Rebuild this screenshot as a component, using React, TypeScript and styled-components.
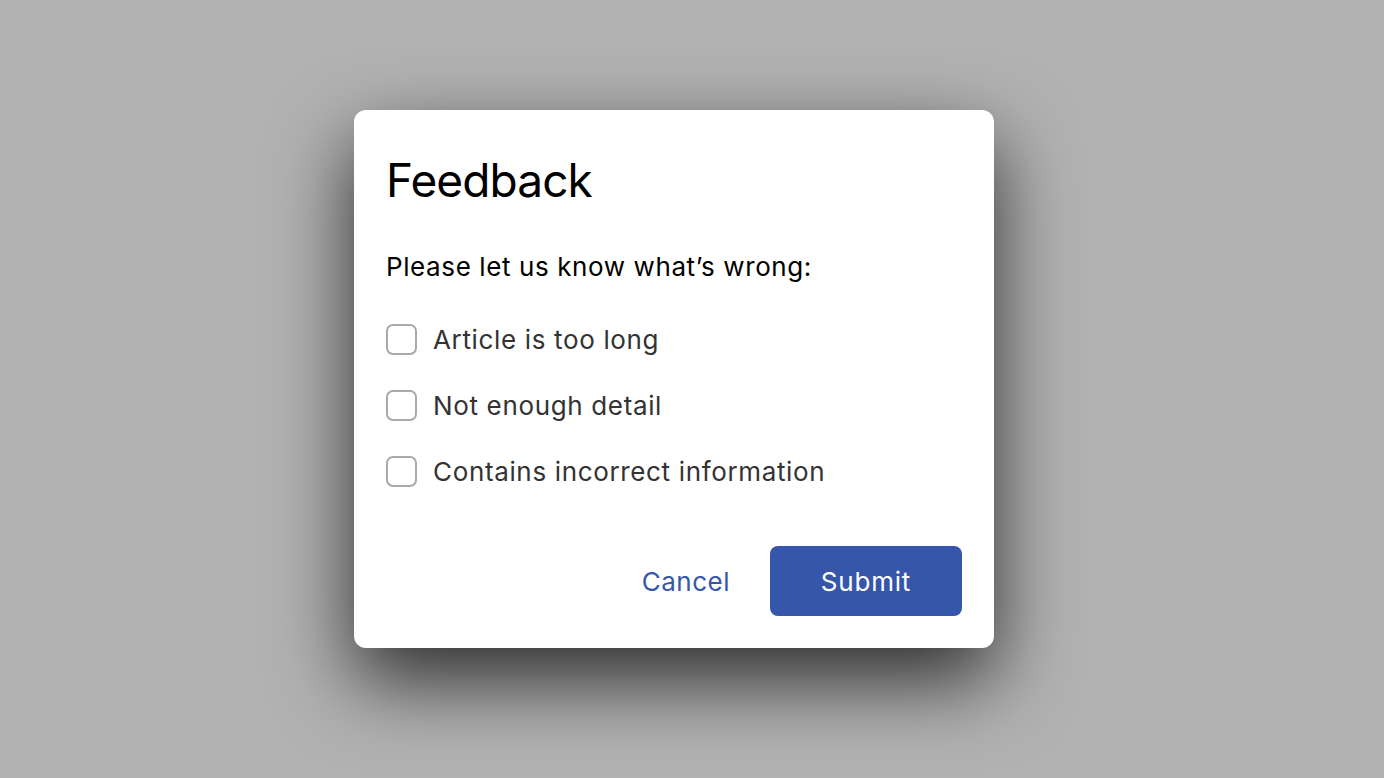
import React from "react";
import styled, { createGlobalStyle } from "styled-components";

const Global = createGlobalStyle`
  html, body { margin: 0; padding: 0; }
  body { background: #b2b2b2; font-family: Inter, "Noto Sans", sans-serif; }
`;

const Backdrop = styled.div`
  min-height: 100vh;
  box-sizing: border-box;
  padding: 110px 0 0 354px;
  display: flex;
  align-items: flex-start;
`;

const Dialog = styled.div`
  width: 640px;
  height: 538px;
  box-sizing: border-box;
  background: #fff;
  border-radius: 12px;
  padding: 32px;
  display: flex;
  flex-direction: column;
  box-shadow: 0 32px 80px rgba(0, 0, 0, 0.75);
`;

const Title = styled.h1`
  margin: 0;
  font-size: 46px;
  font-weight: 400;
  line-height: 76px;
  color: #000;
  letter-spacing: -0.9px;
`;

const Prompt = styled.p`
  margin: 29px 0 0;
  font-size: 26px;
  line-height: 40px;
  color: #000;
  letter-spacing: 0.6px;
`;

const Options = styled.div`
  display: flex;
  flex-direction: column;
  gap: 26px;
  margin-top: 32px;
`;

const Row = styled.label`
  display: flex;
  align-items: center;
  gap: 16px;
  height: 40px;
  cursor: pointer;
`;

const Box = styled.input.attrs({ type: "checkbox" })`
  appearance: none;
  margin: 0;
  width: 31px;
  height: 31px;
  box-sizing: border-box;
  border: 2px solid #a9a9a9;
  border-radius: 7px;
  background: #fff;
`;

const Label = styled.span`
  font-size: 26px;
  color: #333;
  letter-spacing: 0.65px;
`;

const Actions = styled.div`
  margin-top: auto;
  display: flex;
  justify-content: flex-end;
  align-items: center;
  gap: 40px;
`;

const TextButton = styled.button`
  border: none;
  background: none;
  padding: 0;
  font-family: inherit;
  font-size: 26px;
  letter-spacing: 0.5px;
  color: #3656ab;
  cursor: pointer;
`;

const PrimaryButton = styled.button`
  width: 192px;
  height: 70px;
  border: none;
  border-radius: 8px;
  background: #3656ab;
  color: #fff;
  font-family: inherit;
  font-size: 26px;
  letter-spacing: 0.8px;
  cursor: pointer;
`;

const options = ["Article is too long", "Not enough detail", "Contains incorrect information"];

export default function App() {
  return (
    <>
      <Global />
      <Backdrop>
        <Dialog>
          <Title>Feedback</Title>
          <Prompt>Please let us know what’s wrong:</Prompt>
          <Options>
            {options.map((o) => (
              <Row key={o}>
                <Box />
                <Label>{o}</Label>
              </Row>
            ))}
          </Options>
          <Actions>
            <TextButton>Cancel</TextButton>
            <PrimaryButton>Submit</PrimaryButton>
          </Actions>
        </Dialog>
      </Backdrop>
    </>
  );
}
